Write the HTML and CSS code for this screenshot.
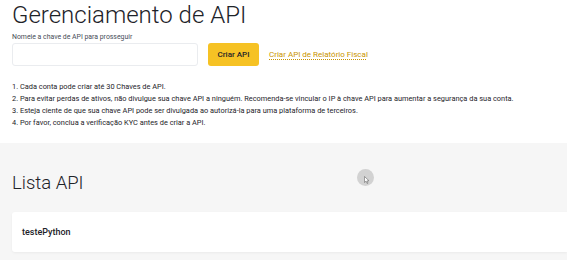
FILE: index.html
```html
<!DOCTYPE html>
<html lang="pt">
<head>
    <meta charset="UTF-8">
    <meta name="viewport" content="width=device-width, initial-scale=1.0">
    <title>Gerenciamento de API</title>
    <link rel="stylesheet" href="styles.css">
</head>
<body>
    <div class="top-section">
        <h1 class="page-title">Gerenciamento de API</h1>
        <div class="field-label">Nomeie a chave de API para prosseguir</div>
        <div class="create-row">
            <input class="name-input" type="text">
            <button class="button">Criar API</button>
            <a class="tax-link" href="#">Criar API de Relatório Fiscal</a>
        </div>
        <ol class="rules">
            <li>1. Cada conta pode criar até 30 Chaves de API.</li>
            <li>2. Para evitar perdas de ativos, não divulgue sua chave API a ninguém. Recomenda-se vincular o IP à chave API para aumentar a segurança da sua conta.</li>
            <li>3. Esteja ciente de que sua chave API pode ser divulgada ao autorizá-la para uma plataforma de terceiros.</li>
            <li>4. Por favor, conclua a verificação KYC antes de criar a API.</li>
        </ol>
    </div>
    <div class="list-section">
        <h2 class="list-title">Lista API</h2>
        <div class="api-card">testePython</div>
        <div class="cursor-dot">
            <svg width="6" height="8" viewBox="0 0 6 8"><path d="M0.5 0.5 L0.5 6.5 L2 5.2 L3.2 7.5 L4 7.1 L2.9 4.9 L5 4.8 Z" fill="#fff" stroke="#666" stroke-width="0.6"/></svg>
        </div>
    </div>
</body>
</html>
```

FILE: styles.css
```css
body {
    font-family: "Roboto", "Liberation Sans", sans-serif;
    background-color: #ffffff;
    color: #1e2329;
    margin: 0;
    padding: 0;
    overflow: hidden;
}
.top-section {
    padding: 0 12px;
    height: 143px;
    box-sizing: border-box;
}
.page-title {
    margin: 0;
    padding-top: 1px;
    font-size: 24px;
    font-weight: 300;
    line-height: 28px;
}
.field-label {
    margin-top: 3px;
    font-size: 6.9px;
    color: #474d57;
    line-height: 10px;
}
.create-row {
    display: flex;
    align-items: center;
    margin-top: 1px;
}
.name-input {
    width: 186px;
    height: 23px;
    box-sizing: border-box;
    border: 1px solid #eaecef;
    border-radius: 3px;
    margin: 0;
}
.button {
    margin-left: 10px;
    width: 51px;
    height: 23px;
    border: none;
    border-radius: 3px;
    background-color: #f6c224;
    color: #1e2329;
    font-family: inherit;
    font-size: 8px;
    font-weight: 500;
    padding: 0;
}
.tax-link {
    margin-left: 10px;
    color: #c99400;
    font-size: 8px;
    text-decoration: underline dotted;
    text-underline-offset: 2px;
}
.rules {
    list-style: none;
    margin: 15px 0 0;
    padding: 0;
    font-size: 7.4px;
    line-height: 12px;
    color: #1e2329;
}
.list-section {
    position: relative;
    background-color: #f6f6f6;
    height: 117px;
    padding: 28px 0 0 12px;
    box-sizing: border-box;
}
.list-title {
    margin: 0;
    font-size: 18.5px;
    font-weight: 300;
    line-height: 24px;
}
.api-card {
    margin-top: 17px;
    height: 40px;
    background-color: #ffffff;
    border-radius: 3px 0 0 3px;
    box-shadow: 0 1px 3px rgba(0, 0, 0, 0.05);
    padding-left: 10px;
    display: flex;
    align-items: center;
    font-size: 9px;
    font-weight: 500;
}
.cursor-dot {
    position: absolute;
    left: 357px;
    top: 26px;
    width: 17px;
    height: 17px;
    border-radius: 50%;
    background-color: #d2d2d2;
    display: flex;
    align-items: center;
    justify-content: center;
}
.cursor-dot svg {
    margin: 4px 0 0 3px;
}
```
